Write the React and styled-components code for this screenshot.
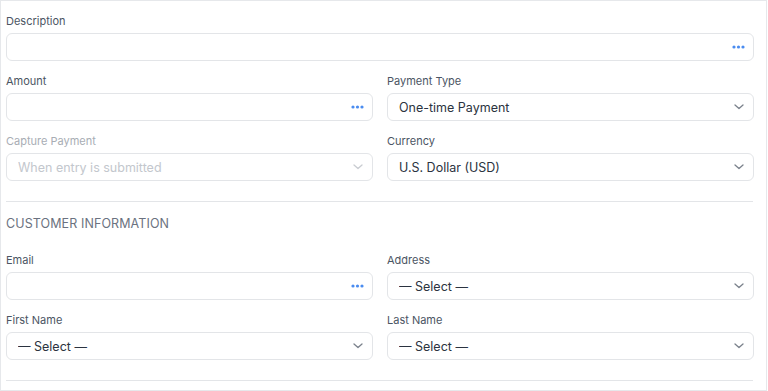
import React from "react";
import styled, { createGlobalStyle } from "styled-components";

const Global = createGlobalStyle`
  html, body { margin: 0; padding: 0; background: #ffffff; }
  body { font-family: Inter, "Noto Sans", sans-serif; -webkit-font-smoothing: antialiased; }
  * { box-sizing: border-box; }
`;

const Panel = styled.div`
  width: 767px;
  height: 391px;
  border: 1px solid #e6e8eb;
  padding: 12px 12px 0 5px;
  overflow: hidden;
  background: #fff;
`;

const Grid = styled.div`
  display: grid;
  grid-template-columns: ${(p) => (p.$single ? "1fr" : "1fr 1fr")};
  column-gap: 14px;
  row-gap: 12px;
  margin-bottom: 12px;
`;

const Field = styled.div`
  display: flex;
  flex-direction: column;
  min-width: 0;
`;

const Label = styled.label`
  font-size: 11px;
  line-height: 16px;
  color: ${(p) => (p.$disabled ? "#a8adb4" : "#4b5563")};
  margin-bottom: 4px;
`;

const Box = styled.div`
  height: 28px;
  border: 1px solid #e3e5e8;
  border-radius: 6px;
  display: flex;
  align-items: center;
  padding: 0 9px 0 11px;
  font-size: 12.5px;
  color: ${(p) => (p.$disabled ? "#c3c7cd" : "#2b3340")};
  background: #fff;
`;

const Value = styled.span`
  flex: 1;
  white-space: nowrap;
  overflow: hidden;
`;

const Divider = styled.hr`
  border: 0;
  border-top: 1px solid #e3e5e8;
  margin: 20px 0 0;
  width: 747px;
`;

const Heading = styled.div`
  font-size: 12.5px;
  line-height: 18px;
  letter-spacing: 0.1px;
  color: #6b7280;
  text-transform: uppercase;
  margin: 13px 0 19px;
`;

const Dots = () => (
  <svg width="13" height="4" viewBox="0 0 13 4" style={{ marginRight: -1 }}>
    <circle cx="2" cy="2" r="1.6" fill="#4a8cf0" />
    <circle cx="6.5" cy="2" r="1.6" fill="#4a8cf0" />
    <circle cx="11" cy="2" r="1.6" fill="#4a8cf0" />
  </svg>
);

const Chevron = ({ light }) => (
  <svg width="10" height="6" viewBox="0 0 10 6">
    <path
      d="M1 1l4 3.6L9 1"
      fill="none"
      stroke={light ? "#c9ccd1" : "#7b828c"}
      strokeWidth="1.3"
      strokeLinecap="round"
      strokeLinejoin="round"
    />
  </svg>
);

const TextInput = ({ label }) => (
  <Field>
    <Label>{label}</Label>
    <Box>
      <Value />
      <Dots />
    </Box>
  </Field>
);

const Select = ({ label, value, disabled }) => (
  <Field>
    <Label $disabled={disabled}>{label}</Label>
    <Box $disabled={disabled}>
      <Value>{value}</Value>
      <Chevron light={disabled} />
    </Box>
  </Field>
);

export default function App() {
  return (
    <>
      <Global />
      <Panel>
        <Grid $single>
          <TextInput label="Description" />
        </Grid>
        <Grid>
          <TextInput label="Amount" />
          <Select label="Payment Type" value="One-time Payment" />
          <Select label="Capture Payment" value="When entry is submitted" disabled />
          <Select label="Currency" value="U.S. Dollar (USD)" />
        </Grid>
        <Divider />
        <Heading>Customer Information</Heading>
        <Grid>
          <TextInput label="Email" />
          <Select label="Address" value="— Select —" />
          <Select label="First Name" value="— Select —" />
          <Select label="Last Name" value="— Select —" />
        </Grid>
        <Divider />
      </Panel>
    </>
  );
}
